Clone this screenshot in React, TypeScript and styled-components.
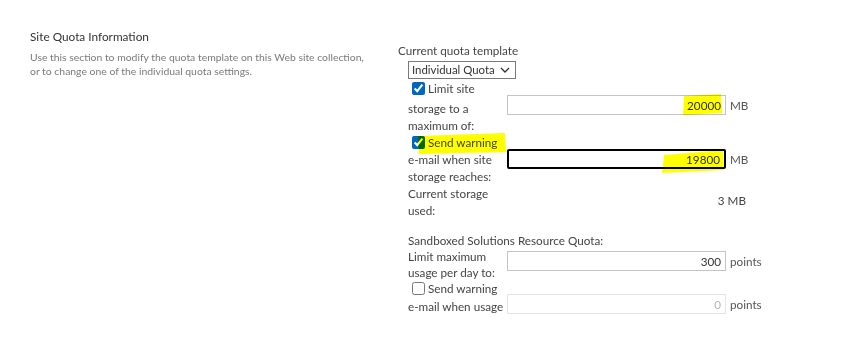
import styled, { createGlobalStyle } from 'styled-components'

const GlobalStyle = createGlobalStyle`
  html, body {
    margin: 0;
    background: #ffffff;
  }
  body {
    font-family: "Segoe UI", Lato, "Open Sans", sans-serif;
    color: #444444;
  }
`

const Page = styled.div`
  position: relative;
  width: 861px;
  height: 340px;
  box-sizing: border-box;
  padding: 29px 0 0 30px;
  display: flex;
  overflow: hidden;
`

const Intro = styled.div`
  width: 368px;
  flex: none;
`

const SectionTitle = styled.div`
  font-size: 11.8px;
  line-height: 16px;
  color: #333333;
`

const SectionText = styled.div`
  margin-top: 5px;
  font-size: 10.4px;
  line-height: 14px;
  color: #7a7a7a;
`

const Settings = styled.div`
  padding-top: 13px;
  font-size: 11.7px;
  line-height: 16px;
`

const Caption = styled.div`
  line-height: 16px;
`

const Block = styled.div`
  margin-left: 10px;
`

const SelectWrap = styled.div`
  position: relative;
  width: 108px;
  height: 18px;
  margin-top: 3px;
`

const Select = styled.select`
  appearance: none;
  width: 100%;
  height: 100%;
  box-sizing: border-box;
  border: 1px solid #7a7a7a;
  border-radius: 0;
  background: #ffffff;
  padding: 0 0 0 3px;
  font: inherit;
  font-size: 11.4px;
  color: #333333;
`

const Chevron = styled.svg`
  position: absolute;
  right: 6px;
  top: 6px;
  pointer-events: none;
`

const Grid = styled.div`
  display: grid;
  grid-template-columns: 97px 219px auto;
  column-gap: 2px;
  margin-top: 1px;
`

const Label = styled.div<{ $lh?: number; $span?: boolean }>`
  grid-column: ${p => (p.$span ? '1 / 4' : '1')};
  line-height: ${p => p.$lh ?? 17}px;
  white-space: nowrap;
`

const CheckLine = styled.div<{ $after?: number }>`
  margin-bottom: ${p => p.$after ?? 0}px;
`

const Field = styled.div<{ $offset: number }>`
  grid-column: 2 / 4;
  display: flex;
  align-items: center;
  align-self: start;
  margin-top: ${p => p.$offset}px;
  gap: 4px;
`

const Check = styled.input`
  width: 13px;
  height: 13px;
  margin: 0 3px 0 4px;
  vertical-align: -2px;
  accent-color: #0067c0;
`

const TextBox = styled.input<{ $focus?: boolean }>`
  width: 219px;
  height: 20px;
  box-sizing: border-box;
  border: ${p => (p.$focus ? '2px solid #000000' : '1px solid #c4c4c4')};
  border-radius: ${p => (p.$focus ? '2px' : '0')};
  padding: 0 4px;
  text-align: right;
  font: inherit;
  font-size: 11.7px;
  color: #333333;
  background: #ffffff;
  outline: none;

  &:disabled {
    border-color: #e4e4e4;
    color: #b5b5b5;
  }
`

const Unit = styled.span`
  color: #555555;
`

const StaticValue = styled.div`
  width: 239px;
  text-align: right;
  color: #444444;
`

const Spacer = styled.div`
  grid-column: 1 / 4;
  height: 13px;
`

const Highlights = styled.svg`
  position: absolute;
  left: 0;
  top: 0;
  pointer-events: none;
  mix-blend-mode: multiply;
`

export default function App() {
  return (
    <>
      <GlobalStyle />
      <Page>
        <Intro>
          <SectionTitle>Site Quota Information</SectionTitle>
          <SectionText>
            Use this section to modify the quota template on this Web site collection,
            <br />
            or to change one of the individual quota settings.
          </SectionText>
        </Intro>
        <Settings>
          <Caption>Current quota template</Caption>
          <Block>
            <SelectWrap>
              <Select defaultValue="individual">
                <option value="individual">Individual Quota</option>
              </Select>
              <Chevron width="10" height="6" viewBox="0 0 10 6">
                <path d="M1 1l4 4 4-4" fill="none" stroke="#333" strokeWidth="1.3" />
              </Chevron>
            </SelectWrap>
            <Grid>
              <Label>
                <CheckLine $after={3}>
                  <Check type="checkbox" defaultChecked />
                  Limit site
                </CheckLine>
                storage to a
                <br />
                maximum of:
              </Label>
              <Field $offset={15}>
                <TextBox defaultValue="20000" />
                <Unit>MB</Unit>
              </Field>

              <Label>
                <CheckLine>
                  <Check type="checkbox" defaultChecked />
                  Send warning
                </CheckLine>
                e-mail when site
                <br />
                storage reaches:
              </Label>
              <Field $offset={15}>
                <TextBox $focus defaultValue="19800" />
                <Unit>MB</Unit>
              </Field>

              <Label>
                Current storage
                <br />
                used:
              </Label>
              <Field $offset={7}>
                <StaticValue>3 MB</StaticValue>
              </Field>

              <Spacer />
              <Label $span $lh={16}>Sandboxed Solutions Resource Quota:</Label>

              <Label $lh={16}>
                Limit maximum
                <br />
                usage per day to:
              </Label>
              <Field $offset={3}>
                <TextBox defaultValue="300" />
                <Unit>points</Unit>
              </Field>

              <Label $lh={16}>
                <CheckLine $after={2}>
                  <Check type="checkbox" />
                  Send warning
                </CheckLine>
                e-mail when usage
              </Label>
              <Field $offset={14}>
                <TextBox disabled defaultValue="0" />
                <Unit>points</Unit>
              </Field>
            </Grid>
          </Block>
        </Settings>
        <Highlights width="861" height="340" viewBox="0 0 861 340">
          <polygon points="684,96 721,94 722,113 683,115" fill="#ffff00" />
          <polygon points="418,136 505,133 506,152 419,154" fill="#ffff00" />
          <polygon points="664,155 723,150 724,170 662,173" fill="#ffff00" />
        </Highlights>
      </Page>
    </>
  )
}
